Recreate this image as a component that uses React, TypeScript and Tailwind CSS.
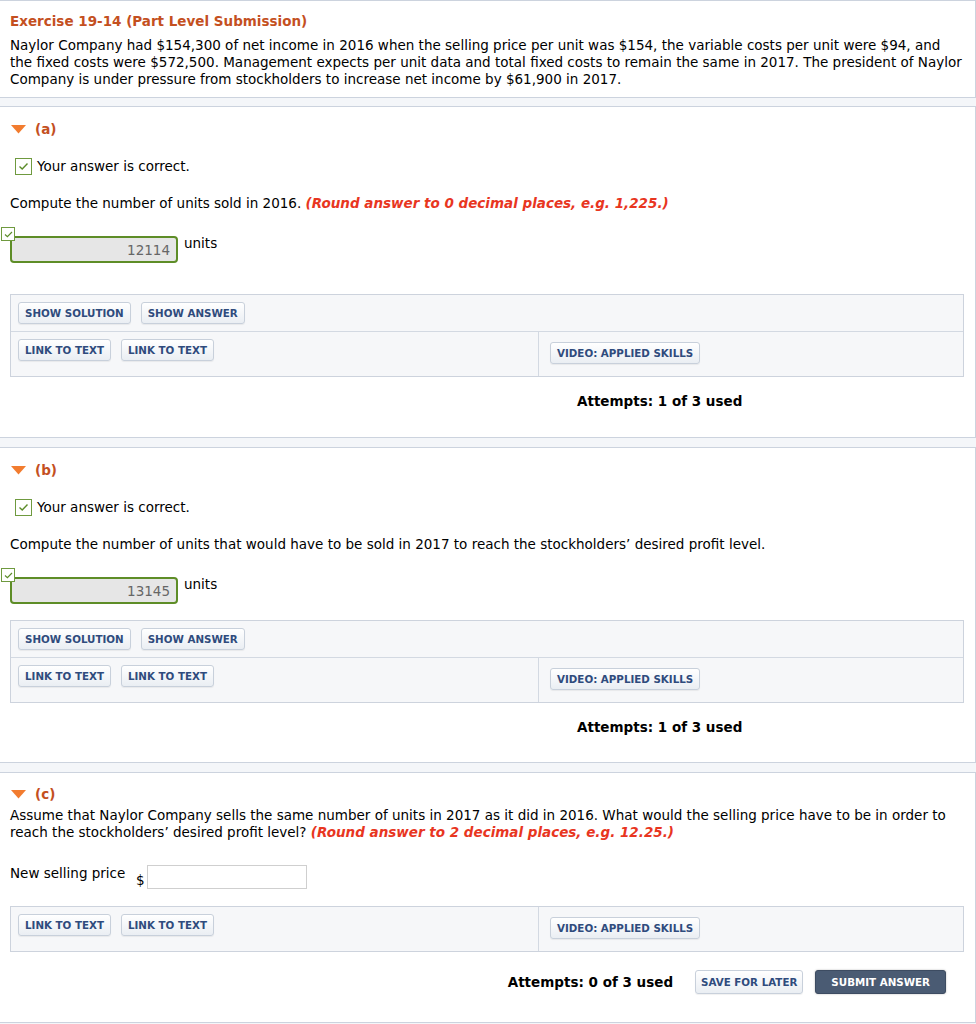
import React from 'react';

const font = { fontFamily: '"DejaVu Sans", Verdana, sans-serif' };

const Btn: React.FC<{ label: string; className?: string }> = ({ label, className }) => (
  <button className={"h-[22px] px-[6px] rounded-[3px] border border-[#c8d0db] bg-gradient-to-b from-white to-[#eaeef3] text-[10.3px] font-bold text-[#2f4b7d] leading-none shadow-[0_1px_1px_rgba(0,0,0,0.06)] " + (className ?? '')}>
    {label}
  </button>
);

const Triangle = () => (
  <svg width="15" height="9" viewBox="0 0 15 9" className="shrink-0">
    <path d="M0 0 H15 L7.5 8.5 Z" fill="#f27c2f" />
  </svg>
);

const PartHeader: React.FC<{ label: string }> = ({ label }) => (
  <div className="flex items-center gap-[9px] pl-[1px] h-[17px]">
    <Triangle />
    <span className="font-bold text-[#c4501f]">{label}</span>
  </div>
);

const Correct = () => (
  <div className="flex items-center gap-[5px] pl-[5px] h-[17px]">
    <span className="w-[17px] h-[17px] border border-[#6f9a3f] bg-white flex items-center justify-center">
      <svg width="11" height="9" viewBox="0 0 11 9">
        <path d="M1.5 4.5 L4.2 7 L9.5 1.5" fill="none" stroke="#5c8c2a" strokeWidth="1.4" />
      </svg>
    </span>
    <span>Your answer is correct.</span>
  </div>
);

const AnswerInput: React.FC<{ value: string }> = ({ value }) => (
  <div className="flex items-start pt-[9px]">
    <div className="relative">
      <span className="absolute -left-[9px] -top-[9px] w-[14px] h-[14px] border border-[#6f9a3f] bg-white flex items-center justify-center">
        <svg width="9" height="7" viewBox="0 0 9 7">
          <path d="M1 3.5 L3.4 5.7 L8 1" fill="none" stroke="#5c8c2a" strokeWidth="1.2" />
        </svg>
      </span>
      <div className="w-[168px] h-[27px] rounded-[4px] border-2 border-[#5e8d27] bg-[#e6e6e6] flex items-center justify-end pr-[6px] text-[#666] pt-[2px]">
        {value}
      </div>
    </div>
    <span className="ml-[6px] -mt-[1px]">units</span>
  </div>
);

const LinkRow = () => (
  <div className="flex">
    <div className="w-[527px] flex gap-[10px] pl-[7px] pt-[7px] pb-[15px]">
      <Btn label="LINK TO TEXT" />
      <Btn label="LINK TO TEXT" />
    </div>
    <div className="flex-1 border-l border-[#d3d9e2] pl-[11px] pt-[10px]">
      <Btn label="VIDEO: APPLIED SKILLS" />
    </div>
  </div>
);

const Panel: React.FC<{ withSolution?: boolean }> = ({ withSolution = true }) => (
  <div className="w-[954px] border border-[#cdd3dd] bg-[#f6f7f9]">
    {withSolution && (
      <div className="flex gap-[10px] pl-[7px] pt-[7px] pb-[7px] border-b border-[#d3d9e2]">
        <Btn label="SHOW SOLUTION" />
        <Btn label="SHOW ANSWER" />
      </div>
    )}
    <LinkRow />
  </div>
);

const Box: React.FC<{ children: React.ReactNode; className?: string }> = ({ children, className }) => (
  <div className={"w-[976px] bg-white border-y border-r border-[#ccd3de] " + (className ?? '')}>{children}</div>
);

export default function App() {
  return (
    <div className="min-h-screen bg-[#f4f6f9] text-[13.5px] leading-[17px] text-black" style={font}>
      <Box className="px-[10px] pt-[12px] pb-[9px]">
        <div className="font-bold text-[#c4501f] mb-[7px]">Exercise 19-14 (Part Level Submission)</div>
        <p className="whitespace-nowrap">
          Naylor Company had $154,300 of net income in 2016 when the selling price per unit was $154, the variable costs per unit were $94, and
          <br />
          the fixed costs were $572,500. Management expects per unit data and total fixed costs to remain the same in 2017. The president of Naylor
          <br />
          Company is under pressure from stockholders to increase net income by $61,900 in 2017.
        </p>
      </Box>

      {/* Part (a) */}
      <Box className="mt-[8px] px-[10px] pt-[14px] pb-[27px]">
        <PartHeader label="(a)" />
        <div className="mt-[20px]"><Correct /></div>
        <p className="mt-[20px]">
          Compute the number of units sold in 2016.{' '}
          <span className="font-bold italic text-[#e8361f]">(Round answer to 0 decimal places, e.g. 1,225.)</span>
        </p>
        <div className="mt-[15px]"><AnswerInput value="12114" /></div>
        <div className="mt-[31px]"><Panel /></div>
        <div className="mt-[16px] pl-[567px] font-bold">Attempts: 1 of 3 used</div>
      </Box>

      {/* Part (b) */}
      <Box className="mt-[9px] px-[10px] pt-[14px] pb-[26px]">
        <PartHeader label="(b)" />
        <div className="mt-[20px]"><Correct /></div>
        <p className="mt-[20px]">
          Compute the number of units that would have to be sold in 2017 to reach the stockholders’ desired profit level.
        </p>
        <div className="mt-[15px]"><AnswerInput value="13145" /></div>
        <div className="mt-[16px]"><Panel /></div>
        <div className="mt-[16px] pl-[567px] font-bold">Attempts: 1 of 3 used</div>
      </Box>

      {/* Part (c) */}
      <Box className="mt-[9px] px-[10px] pt-[13px] pb-[28px]">
        <PartHeader label="(c)" />
        <p className="mt-[4px] whitespace-nowrap">
          Assume that Naylor Company sells the same number of units in 2017 as it did in 2016. What would the selling price have to be in order to
          <br />
          reach the stockholders’ desired profit level?{' '}
          <span className="font-bold italic text-[#e8361f]">(Round answer to 2 decimal places, e.g. 12.25.)</span>
        </p>
        <div className="mt-[24px] flex items-start">
          <span className="w-[126px]">New selling price</span>
          <span className="mt-[7px] w-[11px]">$</span>
          <input className="w-[160px] h-[24px] border border-[#cfcfcf] bg-white outline-none" />
        </div>
        <div className="mt-[17px]"><Panel withSolution={false} /></div>
        <div className="mt-[18px] flex items-center justify-end pr-[19px]">
          <span className="font-bold">Attempts: 0 of 3 used</span>
          <Btn label="SAVE FOR LATER" className="ml-[22px] h-[24px] !px-[5px]" />
          <button className="ml-[12px] h-[24px] px-[15px] rounded-[3px] bg-[#4a5b73] border border-[#3d4c62] text-white text-[10.3px] font-bold leading-none shadow-[0_0_2px_rgba(0,0,0,0.3)]">
            SUBMIT ANSWER
          </button>
        </div>
      </Box>
    </div>
  );
}
